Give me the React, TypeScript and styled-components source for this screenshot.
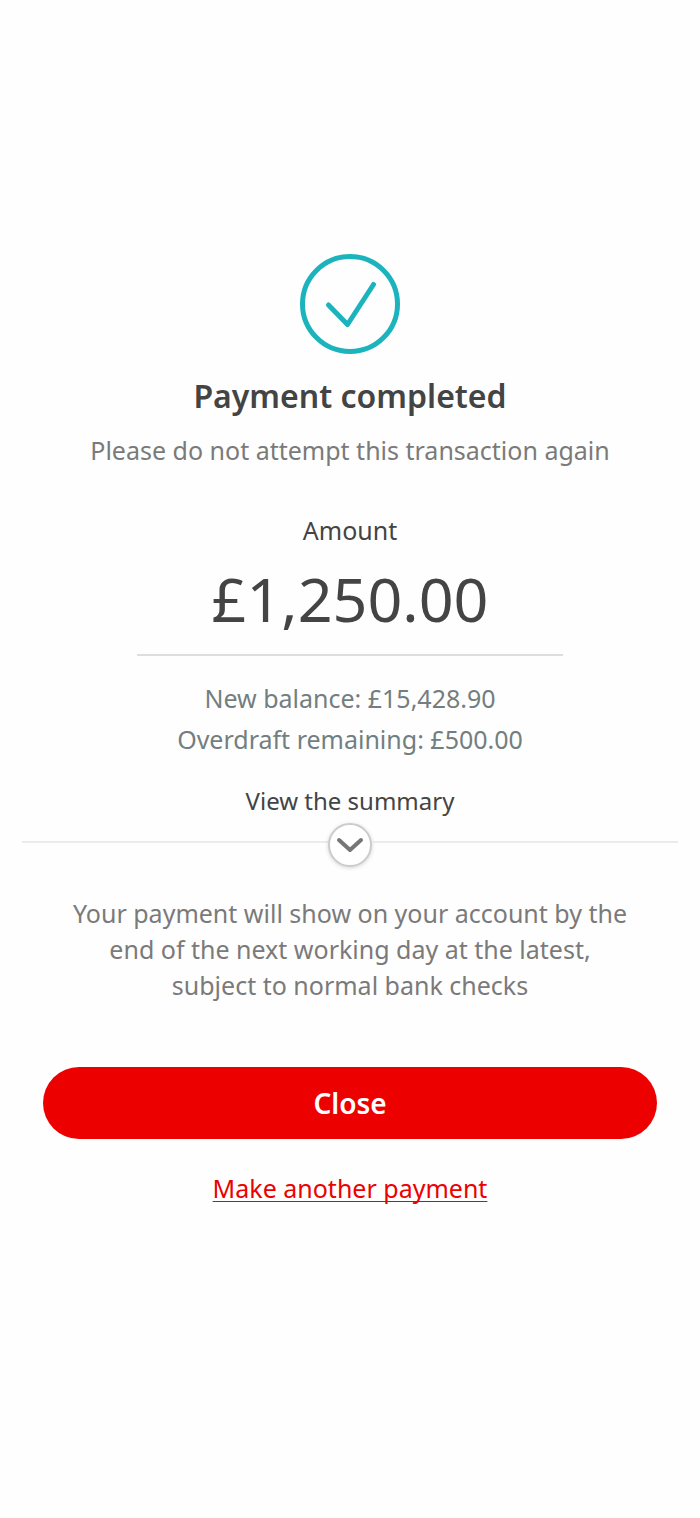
import React, { useState } from "react";
import styled, { createGlobalStyle } from "styled-components";

const GlobalStyle = createGlobalStyle`
  * { box-sizing: border-box; }
  body {
    margin: 0;
    background: #fefefe;
    font-family: "Noto Sans", "Open Sans", sans-serif;
    color: #444444;
  }
`;

const Screen = styled.main`
  min-height: 100vh;
  display: flex;
  flex-direction: column;
  align-items: center;
  padding: 254px 22px 48px;
  text-align: center;
`;

const StatusIcon = styled.svg`
  display: block;
  width: 100px;
  height: 100px;
  fill: none;
  stroke: #1bb3bc;
  stroke-width: 5;
  stroke-linecap: round;
  stroke-linejoin: round;
`;

const Title = styled.h1`
  margin: 20px 0 14px;
  font-size: 32px;
  line-height: 44px;
  font-weight: 600;
`;

const Text = styled.p<{ $tone?: string }>`
  margin: 0;
  font-size: 25px;
  line-height: 36px;
  color: ${(p) => p.$tone ?? "#7a7a7a"};
`;

const AmountBlock = styled.section`
  width: 65%;
  margin-top: 44px;
  padding-bottom: 19px;
  border-bottom: 2px solid #dedede;
`;

const Amount = styled.p`
  margin: 15px 0 0;
  font-size: 61px;
  line-height: 72px;
`;

const Balances = styled.section`
  display: flex;
  flex-direction: column;
  gap: 5px;
  margin-top: 24px;
`;

const SummaryToggle = styled.button`
  width: 100%;
  margin-top: 26px;
  padding: 0;
  border: 0;
  background: none;
  color: #444444;
  font: inherit;
  font-size: 24px;
  line-height: 36px;
  cursor: pointer;
`;

const Divider = styled.span`
  display: flex;
  margin-top: 4px;
`;

const Line = styled.span`
  flex: 1;
  height: 20px;
  border-bottom: 2px solid #ececec;
`;

const Knob = styled.span`
  display: grid;
  place-items: center;
  width: 44px;
  height: 44px;
  border: 2px solid #cccccc;
  border-radius: 50%;
  background: #ffffff;
  box-shadow: 0 1px 4px rgba(0, 0, 0, 0.16);
`;

const Chevron = styled.svg`
  width: 28px;
  height: 18px;
  fill: none;
  stroke: #767676;
  stroke-width: 4;
  stroke-linecap: round;
  stroke-linejoin: round;
`;

const Notice = styled(Text)`
  max-width: 560px;
  margin-top: 28px;
`;

const Actions = styled.div`
  width: 100%;
  display: flex;
  flex-direction: column;
  align-items: center;
  gap: 31px;
  margin-top: 64px;
  padding: 0 21px;
`;

const CloseButton = styled.button`
  width: 100%;
  height: 72px;
  border: 0;
  border-radius: 36px;
  background: #ec0000;
  color: #ffffff;
  font: inherit;
  font-size: 28px;
  font-weight: 600;
  cursor: pointer;
`;

const PaymentLink = styled.a`
  color: #ec0000;
  font-size: 25px;
  line-height: 36px;
  text-decoration: underline;
  text-decoration-thickness: 1px;
  text-underline-offset: 3px;
  text-decoration-skip-ink: none;
`;

export default function App() {
  const [open, setOpen] = useState(false);

  return (
    <>
      <GlobalStyle />
      <Screen>
        <StatusIcon viewBox="0 0 100 100" aria-hidden="true">
          <circle cx="50" cy="50" r="47.5" />
          <path d="M28.5 51 L47.5 70.5 L73.5 30.5" />
        </StatusIcon>
        <Title>Payment completed</Title>
        <Text>Please do not attempt this transaction again</Text>

        <AmountBlock>
          <Text $tone="#444444">Amount</Text>
          <Amount>£1,250.00</Amount>
        </AmountBlock>

        <Balances>
          <Text $tone="#727e80">New balance: £15,428.90</Text>
          <Text $tone="#727e80">Overdraft remaining: £500.00</Text>
        </Balances>

        <SummaryToggle type="button" aria-expanded={open} onClick={() => setOpen(!open)}>
          View the summary
          <Divider>
            <Line />
            <Knob>
              <Chevron viewBox="0 0 28 18" aria-hidden="true">
                <path d="M3 4 L14 14 L25 4" />
              </Chevron>
            </Knob>
            <Line />
          </Divider>
        </SummaryToggle>

        <Notice>
          Your payment will show on your account by the end of the next working
          day at the latest, subject to normal bank checks
        </Notice>

        <Actions>
          <CloseButton type="button">Close</CloseButton>
          <PaymentLink href="#payment">Make another payment</PaymentLink>
        </Actions>
      </Screen>
    </>
  );
}
